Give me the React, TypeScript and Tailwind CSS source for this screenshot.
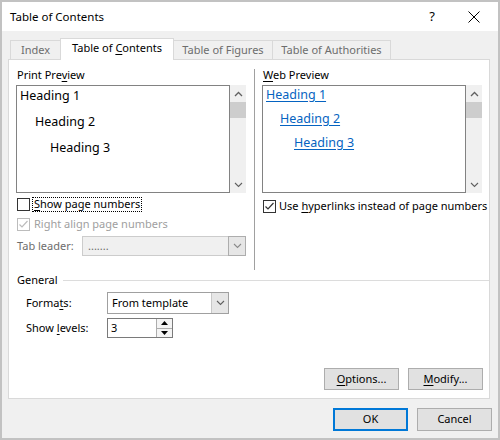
import React from "react"

// Small glyphs used by the scrollbars, combos and checkboxes
const ChevronUp = () => (
  <svg width="9" height="6" viewBox="0 0 9 6">
    <path d="M1 5 L4.5 1.5 L8 5" stroke="#606060" strokeWidth="1.3" fill="none" />
  </svg>
)

const ChevronDown = ({ color = "#606060" }: { color?: string }) => (
  <svg width="9" height="6" viewBox="0 0 9 6">
    <path d="M1 1 L4.5 4.5 L8 1" stroke={color} strokeWidth="1.1" fill="none" />
  </svg>
)

function Checkbox({ checked, disabled }: { checked?: boolean; disabled?: boolean }) {
  const c = disabled ? "#bcbcbc" : "#333333"
  return (
    <span
      className={`w-[13px] h-[13px] border bg-white flex items-center justify-center shrink-0 ${
        disabled ? "border-[#bcbcbc]" : "border-[#333333]"
      }`}
    >
      {checked && (
        <svg width="11" height="11" viewBox="0 0 11 11">
          <path d="M1.5 5.5 L4 8 L9.5 2" stroke={c} strokeWidth="1.2" fill="none" />
        </svg>
      )}
    </span>
  )
}

function ScrollBar() {
  return (
    <div className="w-[16px] h-full bg-[#f0f0f0] flex flex-col shrink-0">
      <div className="h-[17px] flex items-center justify-center">
        <ChevronUp />
      </div>
      <div className="h-[16px] bg-[#cdcdcd]" />
      <div className="flex-1" />
      <div className="h-[17px] flex items-center justify-center">
        <ChevronDown />
      </div>
    </div>
  )
}

function Button({ children, primary }: { children: React.ReactNode; primary?: boolean }) {
  return (
    <div
      className={`w-[75px] h-[23px] bg-[#e1e1e1] flex items-center justify-center ${
        primary ? "border-2 border-[#0078d7]" : "border border-[#adadad]"
      }`}
    >
      <span>{children}</span>
    </div>
  )
}

export default function App() {
  const tabs = [
    { label: <span>Index</span>, w: "w-[51px]" },
    { label: <span>Table of <u className="underline-offset-2">C</u>ontents</span>, w: "w-[114px]", active: true },
    { label: <span>Table of Figures</span>, w: "w-[100px]" },
    { label: <span>Table of Authorities</span>, w: "w-[119px]" },
  ]

  return (
    <div className="w-[500px] h-[440px] border-2 border-[#c2c2c2] bg-[#f0f0f0] flex flex-col font-['Noto_Sans',sans-serif] text-[11px] text-black">
      {/* title bar */}
      <div className="h-[29px] bg-white flex items-center pl-[8px] pr-[18px]">
        <span className="text-[11.5px]">Table of Contents</span>
        <span className="ml-auto text-[13px]">?</span>
        <svg className="ml-[33px]" width="12" height="12" viewBox="0 0 12 12">
          <path d="M0.5 0.5 L11.5 11.5 M11.5 0.5 L0.5 11.5" stroke="#000" strokeWidth="1" />
        </svg>
      </div>

      <div className="pl-[6px] pr-[8px] pt-[7px]">
        {/* tabs */}
        <div className="h-[21px] flex items-end pl-[2px]">
          {tabs.map((t, i) =>
            t.active ? (
              <div
                key={i}
                className={`${t.w} -ml-px h-[22px] -mb-px relative z-10 bg-white border border-b-0 border-[#d9d9d9] flex items-center justify-center pb-[2px]`}
              >
                {t.label}
              </div>
            ) : (
              <div
                key={i}
                className={`${t.w} ${i ? "-ml-px" : ""} h-[19px] bg-[#f0f0f0] border border-b-0 border-[#d9d9d9] flex items-center justify-center text-[#6d6d6d]`}
              >
                {t.label}
              </div>
            )
          )}
        </div>

        {/* tab panel */}
        <div className="h-[340px] border border-[#d9d9d9] bg-white flex flex-col">
          <div className="flex pt-[7px] pl-[7px]">
            {/* print preview */}
            <div className="w-[230px] flex flex-col">
              <div className="h-[16px] leading-[16px] pl-px">
                Print Pre<u className="underline-offset-2">v</u>iew
              </div>
              <div className="mt-[2px] h-[108px] flex">
                <div className="flex-1 border border-[#828282] bg-white pl-[3px] pt-px flex flex-col gap-[8px] text-[12.5px] leading-[18px]">
                  <div>Heading 1</div>
                  <div className="pl-[15px]">Heading 2</div>
                  <div className="pl-[30px]">Heading 3</div>
                </div>
                <ScrollBar />
              </div>
              <div className="mt-[4px] h-[14px] flex items-center pl-px">
                <Checkbox />
                <span className="ml-[2px] h-[15px] border border-dotted border-black px-px flex items-center">
                  <span>
                    <u className="underline-offset-2">S</u>how page numbers
                  </span>
                </span>
              </div>
              <div className="mt-[6px] h-[14px] flex items-center pl-px text-[#a0a0a0]">
                <Checkbox checked disabled />
                <span className="ml-[4px]">Right align page numbers</span>
              </div>
              <div className="mt-[5px] h-[20px] flex items-center">
                <span className="w-[66px] pl-px text-[#6d6d6d]">Tab leader:</span>
                <div className="flex-1 h-full flex">
                  <div className="flex-1 border-y border-l border-[#cccccc] bg-[#f0f0f0] pl-[5px] flex items-center text-[#6d6d6d]">
                    .......
                  </div>
                  <div className="w-[18px] border border-[#adadad] bg-[#e6e6e6] flex items-center justify-center">
                    <ChevronDown color="#8a8a8a" />
                  </div>
                </div>
              </div>
            </div>

            <div className="ml-[8px] mt-[2px] w-px h-[201px] bg-[#a0a0a0]" />

            {/* web preview */}
            <div className="ml-[7px] flex flex-col">
              <div className="h-[16px] leading-[16px] pl-px">
                <u className="underline-offset-2">W</u>eb Preview
              </div>
              <div className="mt-[2px] h-[108px] w-[220px] flex">
                <div className="flex-1 border border-[#828282] bg-white pl-[3px] flex flex-col gap-[6px] text-[12.5px] leading-[18px] text-[#0563c1]">
                  <div><span className="underline underline-offset-2">Heading 1</span></div>
                  <div className="pl-[14px]"><span className="underline underline-offset-2">Heading 2</span></div>
                  <div className="pl-[28px]"><span className="underline underline-offset-2">Heading 3</span></div>
                </div>
                <ScrollBar />
              </div>
              <div className="mt-[6px] h-[14px] flex items-center pl-px">
                <Checkbox checked />
                <span className="ml-[3px] whitespace-nowrap">
                  Use <u className="underline-offset-2">h</u>yperlinks instead of page numbers
                </span>
              </div>
            </div>
          </div>

          {/* general */}
          <div className="mt-[2px] h-[16px] flex items-center pl-[8px]">
            <span>General</span>
            <div className="ml-[5px] flex-1 h-px bg-[#dcdcdc]" />
          </div>
          <div className="mt-[4px] h-[22px] flex items-center pl-[17px]">
            <span className="w-[81px]">
              Forma<u className="underline-offset-2">t</u>s:
            </span>
            <div className="w-[122px] h-full flex border border-[#a0a0a0] bg-white">
              <div className="flex-1 pl-[4px] flex items-center">From template</div>
              <div className="w-[17px] bg-[#e6e6e6] border-l border-[#c8c8c8] flex items-center justify-center">
                <ChevronDown />
              </div>
            </div>
          </div>
          <div className="mt-[4px] h-[20px] flex items-center pl-[17px]">
            <span className="w-[81px]">
              Show <u className="underline-offset-2">l</u>evels:
            </span>
            <div className="w-[66px] h-full flex border border-[#7a7a7a] bg-white">
              <div className="flex-1 pl-[3px] flex items-center">3</div>
              <div className="w-[16px] flex flex-col border-l border-[#adadad] bg-[#f4f4f4]">
                <div className="flex-1 flex items-center justify-center border-b border-[#adadad]">
                  <svg width="7" height="4" viewBox="0 0 7 4">
                    <path d="M0 4 L3.5 0 L7 4 Z" fill="#000" />
                  </svg>
                </div>
                <div className="flex-1 flex items-center justify-center">
                  <svg width="7" height="4" viewBox="0 0 7 4">
                    <path d="M0 0 L3.5 4 L7 0 Z" fill="#000" />
                  </svg>
                </div>
              </div>
            </div>
          </div>

          <div className="mt-auto mb-[8px] flex justify-end gap-[9px] pr-[6px]">
            <div className="w-[75px] h-[22px] bg-[#e1e1e1] border border-[#adadad] flex items-center justify-center">
              <span><u className="underline-offset-2">O</u>ptions...</span>
            </div>
            <div className="w-[75px] h-[22px] bg-[#e1e1e1] border border-[#adadad] flex items-center justify-center">
              <span><u className="underline-offset-2">M</u>odify...</span>
            </div>
          </div>
        </div>
      </div>

      {/* footer */}
      <div className="mt-[9px] flex justify-end gap-[9px] pr-[6px]">
        <Button primary>OK</Button>
        <Button>Cancel</Button>
      </div>
    </div>
  )
}
